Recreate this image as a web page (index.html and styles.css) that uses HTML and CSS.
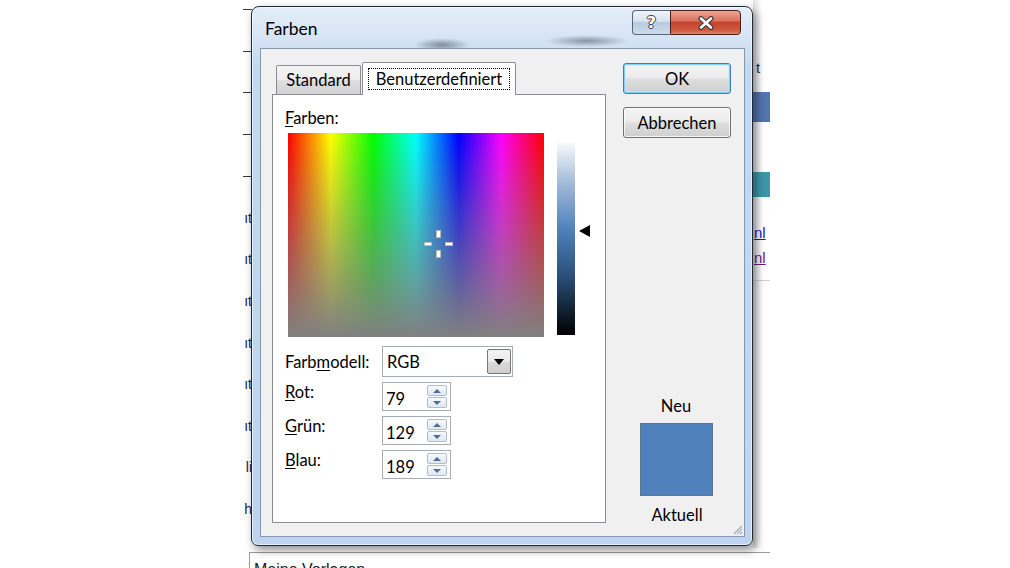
FILE: index.html
```html
<!DOCTYPE html>
<html lang="de">
<head>
<meta charset="utf-8">
<title>Farben</title>
<link rel="stylesheet" href="styles.css">
</head>
<body>
<div class="shot">
  <div class="bgwin-left">
    <div class="brow"><span class="tick"></span></div>
    <div class="brow"><span class="tick"></span></div>
    <div class="brow"><span class="tick"></span></div>
    <div class="brow"><span class="tick"></span></div>
    <div class="brow"><span class="tick"></span></div>
    <div class="brow">ıt</div>
    <div class="brow">ıt</div>
    <div class="brow">ıt</div>
    <div class="brow">ıt</div>
    <div class="brow">ıt</div>
    <div class="brow">ıt</div>
    <div class="brow">li</div>
    <div class="brow">h</div>
  </div>

  <div class="bgwin-right">
    <div class="bt">t</div>
    <div class="bbar blue"></div>
    <div class="bbar teal"></div>
    <div class="blink">nl</div>
    <div class="blink visited">nl</div>
    <div class="bline"></div>
  </div>

  <div class="bgwin-bottom">Meine Vorlagen</div>

  <div class="dialog">
    <div class="titlebar">
      <span class="title">Farben</span>
      <div class="caption">
        <button class="cap-help">?</button>
        <button class="cap-close">
          <svg width="18" height="14" viewBox="0 0 18 14">
            <path d="M4 2.5 L14 11.5 M14 2.5 L4 11.5" stroke="#3b3b3b" stroke-width="5" stroke-linecap="round" fill="none"/>
            <path d="M4 2.5 L14 11.5 M14 2.5 L4 11.5" stroke="#ffffff" stroke-width="2.6" stroke-linecap="round" fill="none"/>
          </svg>
        </button>
      </div>
    </div>

    <div class="client">
      <div class="tabsec">
        <div class="tabs">
          <div class="tab">Standard</div>
          <div class="tab active"><span class="focus">Benutzerdefiniert</span></div>
        </div>
        <div class="panel">
          <div class="lbl"><u>F</u>arben:</div>
          <div class="picker">
            <div class="spectrum">
              <div class="cross">
                <span class="cb ct"></span>
                <span class="cb cbm"></span>
                <span class="cb cl"></span>
                <span class="cb cr"></span>
              </div>
            </div>
            <div class="lum"></div>
            <div class="arrow"></div>
          </div>

          <div class="row model">
            <span class="rlabel">Farb<u>m</u>odell:</span>
            <div class="combo"><span>RGB</span><span class="dd"><span class="tri"></span></span></div>
          </div>
          <div class="row">
            <span class="rlabel"><u>R</u>ot:</span>
            <div class="spin"><span class="val">79</span><div class="spinbtns"><span class="sb"><span class="up"></span></span><span class="sb"><span class="down"></span></span></div></div>
          </div>
          <div class="row">
            <span class="rlabel"><u>G</u>rün:</span>
            <div class="spin"><span class="val">129</span><div class="spinbtns"><span class="sb"><span class="up"></span></span><span class="sb"><span class="down"></span></span></div></div>
          </div>
          <div class="row">
            <span class="rlabel"><u>B</u>lau:</span>
            <div class="spin"><span class="val">189</span><div class="spinbtns"><span class="sb"><span class="up"></span></span><span class="sb"><span class="down"></span></span></div></div>
          </div>
        </div>
      </div>

      <div class="side">
        <button class="btn default">OK</button>
        <button class="btn second">Abbrechen</button>
        <div class="preview">
          <div class="pcap">Neu</div>
          <div class="swatch"></div>
          <div class="pcap akt">Aktuell</div>
        </div>
      </div>

      <svg class="grip" width="11" height="11" viewBox="0 0 11 11">
        <path d="M10 2 L2 10 M10 5 L5 10 M10 8 L8 10" stroke="#9aa3ad" stroke-width="1.2" fill="none"/>
        <path d="M10.5 3 L3 10.5 M10.5 6 L6 10.5" stroke="#ffffff" stroke-width="0.8" fill="none"/>
      </svg>
    </div>
  </div>
</div>
</body>
</html>
```

FILE: styles.css
```css
* { box-sizing: border-box; }

html, body {
  margin: 0;
  padding: 0;
  background: #ffffff;
}

body {
  width: 1010px;
  height: 568px;
  overflow: hidden;
  font-family: Lato, "Open Sans", sans-serif;
  color: #000;
}

.shot {
  position: relative;
  margin-left: 243px;
  width: 527px;
  height: 568px;
  overflow: hidden;
  background: #ffffff;
}

/* ---------- background window fragments ---------- */
.bgwin-left {
  position: absolute;
  left: 0;
  top: -11px;
  width: 9px;
  display: flex;
  flex-direction: column;
  font-family: "Liberation Sans", Arial, sans-serif;
  font-size: 14px;
  color: #1d1d4e;
}

.brow {
  height: 41.6px;
  display: flex;
  align-items: center;
  justify-content: flex-end;
  white-space: nowrap;
}

.tick {
  width: 9px;
  height: 1px;
  background: #3a3a3a;
}

.bgwin-right {
  position: absolute;
  left: 510px;
  top: 0;
  width: 17px;
  display: flex;
  flex-direction: column;
  font-family: "Liberation Sans", Arial, sans-serif;
  font-size: 15px;
  background: linear-gradient(to right, rgba(0, 0, 0, 0.12), rgba(0, 0, 0, 0) 9px);
  height: 548px;
}

.bt {
  margin-top: 60px;
  line-height: 16px;
  padding-left: 3px;
  color: #333;
}

.bbar {
  height: 30px;
}

.bbar.blue {
  margin-top: 16px;
  background: #5474ae;
}

.bbar.teal {
  margin-top: 50px;
  height: 25px;
  background: #3d97a9;
}

.blink {
  margin-top: 28px;
  padding-left: 1px;
  line-height: 16px;
  color: #1a1ac0;
  text-decoration: underline;
  white-space: nowrap;
}

.blink.visited {
  margin-top: 9px;
  color: #6a1a7a;
}

.bline {
  margin-top: 14px;
  height: 1px;
  background: #cfcfcf;
}

.bgwin-bottom {
  position: absolute;
  left: 6px;
  top: 552px;
  right: 0;
  height: 40px;
  border-top: 1px solid #9c9c9c;
  border-left: 1px solid #9c9c9c;
  padding: 8px 0 0 4px;
  font-family: "Liberation Sans", Arial, sans-serif;
  font-size: 16px;
  color: #1c1c1c;
}

/* ---------- dialog window ---------- */
.dialog {
  position: absolute;
  left: 8px;
  top: 6px;
  width: 502px;
  height: 540px;
  border: 1px solid #1e2b3a;
  border-radius: 8px 8px 7px 7px;
  background:
    radial-gradient(ellipse 28px 7px at 190px 38px, rgba(45, 55, 75, 0.5), rgba(45, 55, 75, 0)),
    radial-gradient(ellipse 42px 6px at 335px 34px, rgba(45, 55, 75, 0.45), rgba(45, 55, 75, 0)),
    linear-gradient(to bottom, #e4edf8 0px, #d6e4f4 30px, #c3d9f1 60px, #bcd4ef 100%);
  box-shadow: inset 0 0 0 1px rgba(255, 255, 255, 0.6), 3px 4px 10px rgba(0, 0, 0, 0.45);
  display: flex;
  flex-direction: column;
  padding: 0 7px 8px 8px;
}

.titlebar {
  height: 41px;
  flex: none;
  display: flex;
  align-items: flex-start;
}

.title {
  padding: 11px 0 0 5px;
  font-size: 17.5px;
  line-height: 21px;
  color: #000;
}

.caption {
  margin-left: auto;
  margin-top: 3px;
  margin-right: 4px;
  display: flex;
}

.cap-help {
  width: 38px;
  height: 25px;
  padding: 0;
  border: 1px solid #56667c;
  border-right: none;
  border-radius: 4px 0 0 4px;
  background: linear-gradient(#f0f4fa, #d8e2ef 45%, #b9cbe0 50%, #cddbeb);
  color: #ffffff;
  font-family: "DejaVu Sans", sans-serif;
  font-weight: bold;
  font-size: 16px;
  line-height: 23px;
  text-shadow: 1px 0 0 #3f3f3f, -1px 0 0 #3f3f3f, 0 1px 0 #3f3f3f, 0 -1px 0 #3f3f3f;
}

.cap-close {
  width: 71px;
  height: 25px;
  padding: 0;
  border: 1px solid #4a1f16;
  border-radius: 0 4px 4px 0;
  background: linear-gradient(#eba696, #da735f 42%, #c5432d 50%, #cf5b40 85%, #e2866c);
  display: flex;
  align-items: center;
  justify-content: center;
}

.client {
  flex: 1;
  position: relative;
  background: #f0f0f0;
  border: 1px solid #8397b0;
  display: flex;
  gap: 17px;
  padding: 13px 13px 13px 11px;
}

/* ---------- tabs ---------- */
.tabsec {
  width: 334px;
  display: flex;
  flex-direction: column;
}

.tabs {
  height: 33px;
  flex: none;
  display: flex;
  align-items: flex-end;
  padding-left: 4px;
  margin-bottom: -1px;
  position: relative;
  z-index: 1;
}

.tab {
  width: 85px;
  height: 29px;
  margin-bottom: 1px;
  border: 1px solid #898c95;
  border-bottom: none;
  border-radius: 2px 2px 0 0;
  background: linear-gradient(#f4f4f4, #ececec 50%, #dedede 52%, #d2d2d2);
  display: flex;
  align-items: center;
  justify-content: center;
  font-size: 16.5px;
  line-height: 20px;
}

.tab.active {
  width: 154px;
  height: 33px;
  margin-bottom: 0;
  margin-left: 1px;
  background: #ffffff;
  padding-bottom: 1px;
}

.focus {
  width: 142px;
  height: 22px;
  border: 1px dotted #000;
  text-align: center;
  line-height: 20px;
}

.panel {
  flex: 1;
  background: #ffffff;
  border: 1px solid #898c95;
  padding: 13px 0 0 12px;
}

.lbl {
  font-size: 16.5px;
  line-height: 20px;
  height: 20px;
}

u {
  text-underline-offset: 2px;
  text-decoration-thickness: 1px;
}

.picker {
  display: flex;
  align-items: flex-start;
  margin-top: 5px;
}

.spectrum {
  position: relative;
  width: 256px;
  height: 204px;
  margin-left: 3px;
  background:
    linear-gradient(to bottom, rgba(128, 128, 128, 0), rgba(128, 128, 128, 1)),
    linear-gradient(to right, #ff0000, #ffff00 16.67%, #00ff00 33.33%, #00ffff 50%, #0000ff 66.67%, #ff00ff 83.33%, #ff0000);
}

.cross {
  position: absolute;
  left: 150px;
  top: 111px;
  width: 0;
  height: 0;
}

.cb {
  position: absolute;
  background: #ffffff;
  border: 1px solid #b9b9b9;
}

.ct, .cbm {
  width: 5px;
  height: 8px;
  left: -2px;
}

.ct { top: -14px; }
.cbm { top: 6px; }

.cl, .cr {
  width: 8px;
  height: 4px;
  top: -2px;
}

.cl { left: -14px; }
.cr { left: 7px; }

.lum {
  width: 18px;
  height: 192px;
  margin-left: 13px;
  margin-top: 10px;
  background: linear-gradient(to bottom, #f6f9fc 0%, #9fb7d6 22%, #4f81bd 45%, #2b4d77 70%, #000000 100%);
}

.arrow {
  width: 0;
  height: 0;
  margin-left: 4px;
  margin-top: 92px;
  border-right: 11px solid #000;
  border-top: 6px solid transparent;
  border-bottom: 6px solid transparent;
}

/* ---------- form rows ---------- */
.row {
  display: flex;
  align-items: flex-start;
  margin-top: 5px;
}

.row.model {
  margin-top: 9px;
  align-items: center;
}

.rlabel {
  width: 97px;
  flex: none;
  font-size: 16.5px;
  line-height: 20px;
}

.combo {
  width: 131px;
  height: 31px;
  border: 1px solid #a5acb5;
  background: #fff;
  display: flex;
  align-items: center;
  padding: 0 1px 0 4px;
  font-size: 16.5px;
}

.dd {
  margin-left: auto;
  width: 24px;
  height: 25px;
  border: 1px solid #767676;
  border-radius: 2px;
  background: linear-gradient(#f3f3f3, #e9e9e9 50%, #dadada 52%, #cfcfcf);
  display: flex;
  align-items: center;
  justify-content: center;
}

.tri {
  width: 0;
  height: 0;
  border-top: 6px solid #000;
  border-left: 5px solid transparent;
  border-right: 5px solid transparent;
}

.spin {
  width: 69px;
  height: 29px;
  border: 1px solid #a5acb5;
  background: #fff;
  display: flex;
  align-items: center;
  padding: 0 3px;
  font-size: 16.5px;
}

.val {
  line-height: 20px;
  margin-top: 4px;
}

.spinbtns {
  margin-left: auto;
  width: 20px;
  height: 23px;
  display: flex;
  flex-direction: column;
  gap: 1px;
}

.sb {
  flex: 1;
  border: 1px solid #b2bccb;
  border-radius: 2px;
  background: linear-gradient(#f7f9fc, #e1e8f1);
  display: flex;
  align-items: center;
  justify-content: center;
}

.up {
  width: 0;
  height: 0;
  border-bottom: 4px solid #4d6d9d;
  border-left: 4px solid transparent;
  border-right: 4px solid transparent;
}

.down {
  width: 0;
  height: 0;
  border-top: 4px solid #4d6d9d;
  border-left: 4px solid transparent;
  border-right: 4px solid transparent;
}

/* ---------- right column ---------- */
.side {
  width: 108px;
  display: flex;
  flex-direction: column;
}

.btn {
  width: 108px;
  height: 31px;
  padding: 0;
  flex: none;
  border: 1px solid #707070;
  border-radius: 3px;
  background: linear-gradient(#f3f3f3 0%, #ebebeb 48%, #dddddd 52%, #cfcfcf 100%);
  box-shadow: inset 0 0 0 1px rgba(255, 255, 255, 0.75);
  font-family: Lato, "Open Sans", sans-serif;
  font-size: 16.5px;
  color: #000;
}

.btn.default {
  margin-top: 1px;
  border-color: #3c7fb1;
  box-shadow: inset 0 0 0 1px #7fd2f2, inset 0 0 0 2px rgba(190, 235, 250, 0.6);
}

.btn.second {
  margin-top: 13px;
}

.preview {
  margin-top: auto;
  margin-bottom: -2px;
  display: flex;
  flex-direction: column;
  align-items: center;
}

.pcap {
  font-size: 16.5px;
  line-height: 20px;
  margin-right: 2px;
}

.swatch {
  width: 73px;
  height: 73px;
  margin-top: 7px;
  margin-right: 2px;
  background: #4f81bd;
  border: 1px solid #5f7590;
}

.pcap.akt {
  margin-top: 9px;
  margin-right: 0;
}

.grip {
  position: absolute;
  right: 1px;
  bottom: 1px;
}
```
